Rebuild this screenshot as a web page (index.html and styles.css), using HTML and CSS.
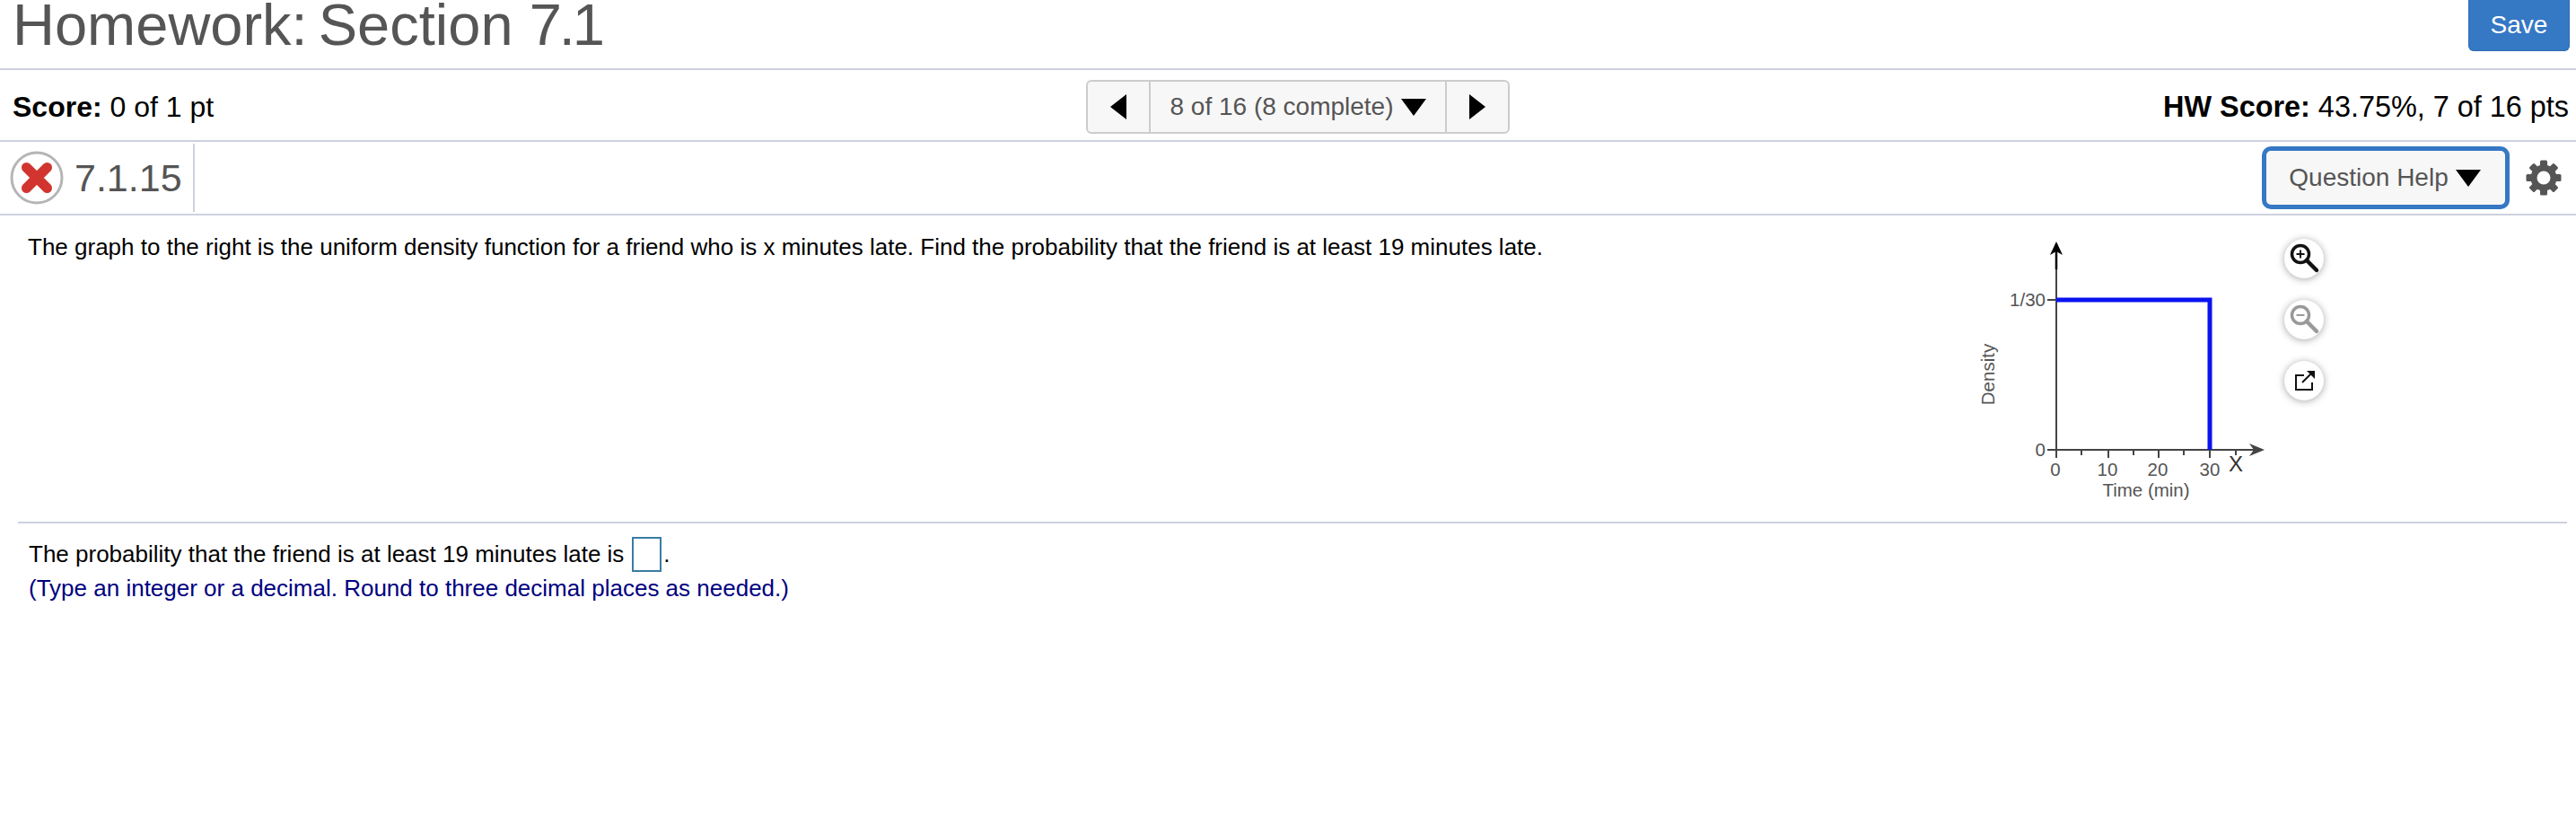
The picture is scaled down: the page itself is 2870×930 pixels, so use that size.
FILE: index.html
```html
<!DOCTYPE html>
<html lang="en">
<head>
<meta charset="utf-8">
<title>Homework: Section 7.1</title>
<link rel="stylesheet" href="styles.css">
</head>
<body>
<header class="title-row">
  <h1 class="title"><span class="title-hw">Homework: </span>Section <span class="title-num">7.1</span></h1>
  <button class="save">Save</button>
</header>
<section class="score-row">
  <div class="score"><b>Score:</b> 0 of 1 pt</div>
  <nav class="pager">
    <span class="pager-btn pager-prev"><i class="tri tri-left"></i></span>
    <span class="pager-mid">8 of 16 (8 complete)<i class="caret"></i></span>
    <span class="pager-btn pager-next"><i class="tri tri-right"></i></span>
  </nav>
  <div class="hw-score"><b>HW Score:</b> 43.75%, 7 of 16 pts</div>
</section>
<section class="question-row">
  <div class="qid">
    <svg class="wrong" viewBox="0 0 60 60" width="60" height="60" aria-hidden="true">
      <circle cx="30" cy="30" r="28" fill="#fff" stroke="#b5b5b5" stroke-width="3"/>
      <path d="M18.5 18.5 L41.5 41.5 M41.5 18.5 L18.5 41.5" stroke="#d2352f" stroke-width="11" stroke-linecap="round" fill="none"/>
    </svg>
    <span class="qnum">7.1.15</span>
  </div>
  <div class="qtools">
    <button class="help">Question Help<i class="caret"></i></button>
    <svg class="gear" viewBox="-20 -20 40 40" width="40" height="40" aria-hidden="true">
      <g fill="#555">
        <rect x="-4" y="-19.5" width="8" height="39" rx="1.5"/>
        <rect x="-4" y="-19.5" width="8" height="39" rx="1.5" transform="rotate(45)"/>
        <rect x="-4" y="-19.5" width="8" height="39" rx="1.5" transform="rotate(90)"/>
        <rect x="-4" y="-19.5" width="8" height="39" rx="1.5" transform="rotate(135)"/>
        <circle r="14.5"/>
      </g>
      <circle r="7.5" fill="#fff"/>
    </svg>
  </div>
</section>
<main>
  <section class="prompt">
    <p class="prompt-text">The graph to the right is the uniform density function for a friend who is x minutes late. Find the probability that the friend is at least 19 minutes late.</p>
    <svg class="graph" viewBox="2190 250 345 320" width="345" height="320" role="img" aria-label="Uniform density graph">
      <g stroke="#444" stroke-width="2" fill="none">
        <path d="M2291 300V501M2281 334H2291M2281 501H2512"/>
        <path d="M2291 501v9M2319 501v6M2349 501v9M2377 501v6M2405 501v9M2433 501v6M2462 501v9M2491 501v6"/>
      </g>
      <path d="M2506 494L2523 501L2506 508L2511 501Z" fill="#444"/>
      <path d="M2291 272V300" stroke="#000" stroke-width="2.5"/>
      <path d="M2284 284L2291 269L2298 284L2291 280Z" fill="#000"/>
      <path d="M2291 334H2462V501" stroke="#0a14f0" stroke-width="5" fill="none"/>
      <g class="g-label">
        <text x="2279" y="341" text-anchor="end">1/30</text>
        <text x="2279" y="508" text-anchor="end">0</text>
        <text x="2290" y="530" text-anchor="middle">0</text>
        <text x="2348" y="530" text-anchor="middle">10</text>
        <text x="2404" y="530" text-anchor="middle">20</text>
        <text x="2462" y="530" text-anchor="middle">30</text>
        <text class="g-x" x="2491" y="525" text-anchor="middle">X</text>
        <text x="2391" y="553" text-anchor="middle">Time (min)</text>
        <text x="2222" y="417" text-anchor="middle" transform="rotate(-90 2222 417)">Density</text>
      </g>
    </svg>
    <div class="zoom-tools">
      <span class="zoom-btn">
        <svg viewBox="0 0 44 44" width="44" height="44" aria-hidden="true">
          <circle cx="18" cy="17" r="9.5" fill="none" stroke="#111" stroke-width="3.5"/>
          <path d="M25 24L36 35" stroke="#111" stroke-width="4.5" stroke-linecap="round"/>
          <path d="M13.5 17H22.5M18 12.5V21.5" stroke="#111" stroke-width="2"/>
        </svg>
      </span>
      <span class="zoom-btn">
        <svg viewBox="0 0 44 44" width="44" height="44" aria-hidden="true">
          <circle cx="18" cy="17" r="9.5" fill="none" stroke="#999" stroke-width="3.5"/>
          <path d="M25 24L36 35" stroke="#999" stroke-width="4.5" stroke-linecap="round"/>
          <path d="M13.5 17H22.5" stroke="#999" stroke-width="2"/>
        </svg>
      </span>
      <span class="zoom-btn">
        <svg viewBox="0 0 44 44" width="44" height="44" aria-hidden="true">
          <path d="M22 16H13V32H31V24" fill="none" stroke="#111" stroke-width="2"/>
          <path d="M20 24L30 14" stroke="#111" stroke-width="2"/>
          <path d="M25 11H34V20Z" fill="#111"/>
        </svg>
      </span>
    </div>
  </section>
  <section class="answer">
    <p class="answer-line">The probability that the friend is at least 19 minutes late is<span class="box"></span>.</p>
    <p class="hint">(Type an integer or a decimal. Round to three decimal places as needed.)</p>
  </section>
</main>
</body>
</html>
```
FILE: styles.css
```css
* { box-sizing: border-box; }
html, body { margin: 0; padding: 0; background: #fff; }
body { width: 2870px; height: 930px; overflow: hidden; font-family: "Liberation Sans", Arial, sans-serif; color: #000; }

.title-row { height: 78px; border-bottom: 2px solid #cdd1de; display: flex; justify-content: space-between; align-items: flex-start; padding: 0 7px 0 14px; }
.title { margin: 0; font-size: 65px; line-height: 55px; font-weight: 400; color: #555; }
.title-hw { word-spacing: -6px; }
.title-num { letter-spacing: -3px; }
.save { width: 113px; height: 57px; background: #3578c4; color: #fff; border: 1px solid #2f6db3; border-top: 0; border-radius: 0 0 6px 6px; font: 28px "Liberation Sans", Arial, sans-serif; padding: 0; }

.score-row { height: 80px; border-bottom: 2px solid #cdd1de; display: grid; grid-template-columns: 1fr 472px 1fr; align-items: center; padding: 4px 8px 0 14px; font-size: 32.4px; }
.score { font-size: 32px; }
.pager { grid-column: 2; margin-left: 8px; width: 472px; height: 60px; display: flex; border: 2px solid #ccc; border-radius: 6px; background: #f7f7f7; color: #555; font-size: 28px; }
.pager-btn { width: 68px; display: flex; align-items: center; justify-content: center; }
.pager-mid { flex: 1; display: flex; align-items: center; justify-content: center; border-left: 2px solid #ccc; border-right: 2px solid #ccc; }
.hw-score { text-align: right; }
.tri { display: block; width: 0; height: 0; border-top: 14.5px solid transparent; border-bottom: 14.5px solid transparent; }
.tri-left { border-right: 18px solid #000; }
.tri-right { border-left: 18px solid #000; }
.caret { display: inline-block; width: 0; height: 0; margin-left: 8px; border-left: 14px solid transparent; border-right: 14px solid transparent; border-top: 19px solid #000; }

.question-row { height: 82px; border-bottom: 2px solid #cdd1de; display: flex; justify-content: space-between; padding: 0 16px 0 11px; }
.qid { display: flex; align-items: center; height: 76px; margin-top: 2px; border-right: 2px solid #cdd1de; padding-right: 12px; }
.wrong { display: block; }
.qnum { margin-left: 12px; font-size: 43px; color: #555; }
.qtools { display: flex; align-items: center; gap: 18px; height: 76px; margin-top: 2px; }
.help { width: 276px; height: 70px; border: 5px solid #3578c4; border-radius: 10px; background: #f7f7f7; color: #555; font: 28px "Liberation Sans", Arial, sans-serif; padding: 0 2px 0 0; display: flex; align-items: center; justify-content: center; }
.gear { display: block; }

.prompt { height: 343px; margin: 0 10px 0 20px; border-bottom: 2px solid #cdd1de; display: flex; padding-top: 10px; }
.prompt-text { margin: 9px 0 0 11px; flex: 1; font-size: 26px; line-height: 32px; }
.graph { display: block; flex: none; }
.g-label { font-size: 20.5px; fill: #555; }
.g-x { font-size: 24px; fill: #333; }
.zoom-tools { display: flex; flex-direction: column; gap: 24px; margin: 16px 271px 0 10px; }
.zoom-btn { display: block; width: 44px; height: 44px; border-radius: 50%; background: #fff; box-shadow: 0 1px 9px rgba(0,0,0,.35); }
.zoom-btn svg { display: block; }

.answer { padding: 14px 0 0 32px; font-size: 26px; }
.answer p { margin: 0; }
.answer-line { display: flex; align-items: center; height: 40px; }
.box { display: block; width: 33px; height: 39px; margin: 0 2px 0 9px; border: 2px solid #3a7ca5; background: #fff; }
.hint { color: #000080; line-height: 36px; }
```
